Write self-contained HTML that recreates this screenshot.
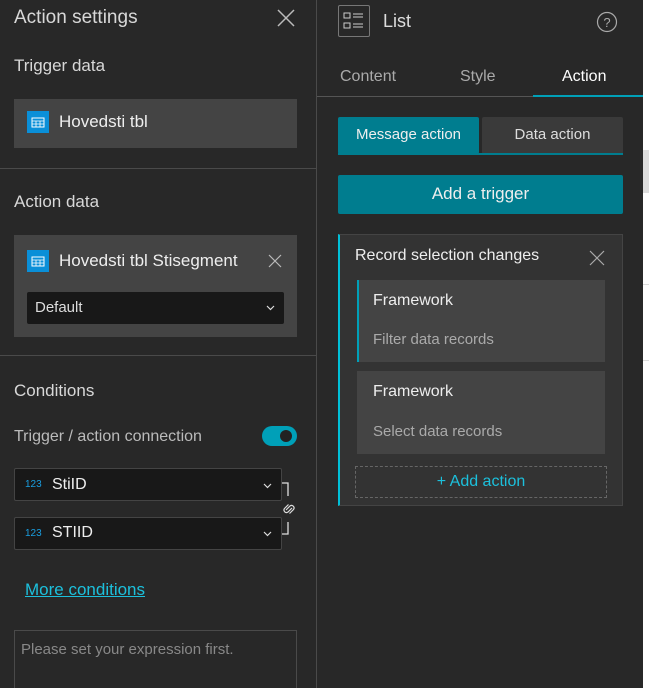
<!DOCTYPE html>
<html><head><style>
*{box-sizing:border-box;margin:0;padding:0}
html,body{width:649px;height:688px;overflow:hidden}
body{background:#fff;font-family:"Liberation Sans",sans-serif;position:relative}
.a{position:absolute}
.L{left:0;top:0;width:317px;height:688px;background:#282828;border-right:1px solid #4a4a4a;overflow:hidden}
.R{left:317px;top:0;width:326px;height:688px;background:#282828}
.t{color:#d8d8d8}
.hr{height:1px;background:#4a4a4a}
.icon{width:22px;height:22px;background:#0a8fd8;}
.sel{background:#181818;border:1px solid #444;border-radius:2px;color:#e8e8e8}
</style></head><body>
<div class="a L">
 <div class="a t" style="left:14px;top:7px;font-size:19px">Action settings</div>
 <svg class="a" style="left:277px;top:9px" width="18" height="18"><path d="M1 1L17 17M17 1L1 17" stroke="#bbb" stroke-width="1.5"/></svg>
 <div class="a t" style="left:14px;top:56px;font-size:17px">Trigger data</div>
 <div class="a" style="left:14px;top:99px;width:283px;height:49px;background:#444"></div>
 <div class="a icon" style="left:27px;top:111px"><svg width="22" height="22"><rect x="5" y="7" width="12" height="9" fill="none" stroke="#fff"/><path d="M5 10H17M5 13H17M9 10V16M13 10V16" stroke="#fff" stroke-width=".8"/></svg></div>
 <div class="a" style="left:59px;top:112px;font-size:17px;color:#eee">Hovedsti tbl</div>
 <div class="a hr" style="left:0;top:168px;width:317px"></div>
 <div class="a t" style="left:14px;top:192px;font-size:17px">Action data</div>
 <div class="a" style="left:14px;top:235px;width:283px;height:102px;background:#444"></div>
 <div class="a icon" style="left:27px;top:250px"><svg width="22" height="22"><rect x="5" y="7" width="12" height="9" fill="none" stroke="#fff"/><path d="M5 10H17M5 13H17M9 10V16M13 10V16" stroke="#fff" stroke-width=".8"/></svg></div>
 <div class="a" style="left:59px;top:251px;font-size:17px;color:#eee">Hovedsti tbl Stisegment</div>
 <svg class="a" style="left:268px;top:254px" width="14" height="14"><path d="M1 1L13 13M13 1L1 13" stroke="#bbb" stroke-width="1.2"/></svg>
 <div class="a sel" style="left:27px;top:292px;width:257px;height:32px;border:none"></div>
 <div class="a" style="left:35px;top:299px;font-size:15px;color:#ddd">Default</div>
 <svg class="a" style="left:266px;top:305px" width="9" height="6"><path d="M1 1L4.5 4.5L8 1" stroke="#ddd" fill="none" stroke-width="1.2"/></svg>
 <div class="a hr" style="left:0;top:355px;width:317px"></div>
 <div class="a t" style="left:14px;top:381px;font-size:17px">Conditions</div>
 <div class="a" style="left:14px;top:428px;font-size:16px;color:#bbb">Trigger / action connection</div>
 <div class="a" style="left:262px;top:426px;width:35px;height:20px;border-radius:10px;background:#00a0b8"></div>
 <div class="a" style="left:280px;top:430px;width:12px;height:12px;border-radius:6px;background:#222"></div>
 <div class="a sel" style="left:14px;top:468px;width:268px;height:33px"></div>
 <div class="a" style="left:25px;top:479px;font-size:10px;color:#1a9ee0">123</div>
 <div class="a" style="left:52px;top:476px;font-size:16px;color:#eee">StiID</div>
 <svg class="a" style="left:263px;top:483px" width="9" height="6"><path d="M1 1L4.5 4.5L8 1" stroke="#ddd" fill="none" stroke-width="1.2"/></svg>
 <div class="a sel" style="left:14px;top:517px;width:268px;height:33px"></div>
 <div class="a" style="left:25px;top:528px;font-size:10px;color:#1a9ee0">123</div>
 <div class="a" style="left:52px;top:524px;font-size:16px;color:#eee">STIID</div>
 <svg class="a" style="left:263px;top:531px" width="9" height="6"><path d="M1 1L4.5 4.5L8 1" stroke="#ddd" fill="none" stroke-width="1.2"/></svg>
 <svg class="a" style="left:280px;top:482px" width="20" height="54"><path d="M2 1H8V14M8 40V52H2" stroke="#ddd" fill="none" stroke-width="1.3"/><path d="M6 28l4-4a2.5 2.5 0 0 1 3.5 3.5l-4 4M12 26l-4 4a2.5 2.5 0 0 1-3.5-3.5l4-4" stroke="#ddd" fill="none" stroke-width="1.2"/></svg>
 <div class="a" style="left:25px;top:580px;font-size:17px;color:#1cc0dc;text-decoration:underline">More conditions</div>
 <div class="a" style="left:14px;top:630px;width:283px;height:80px;border:1px solid #4a4a4a"></div>
 <div class="a" style="left:21px;top:641px;font-size:15px;color:#888">Please set your expression first.</div>
</div>
<div class="a R">
 <div class="a" style="left:21px;top:5px;width:32px;height:32px;border:1px solid #777;border-radius:2px"></div>
 <svg class="a" style="left:21px;top:5px" width="32" height="32"><rect x="6" y="8" width="6" height="5" fill="none" stroke="#ccc"/><rect x="6" y="18" width="6" height="5" fill="none" stroke="#ccc"/><path d="M15 9H25M15 12H25M15 19H25M15 22H25" stroke="#ccc"/></svg>
 <div class="a t" style="left:66px;top:11px;font-size:18px;color:#ddd">List</div>
 <svg class="a" style="left:279px;top:11px" width="22" height="22"><circle cx="11" cy="11" r="9.5" fill="none" stroke="#aaa" stroke-width="1.2"/><text x="11" y="16" font-size="13" fill="#aaa" text-anchor="middle" font-family="Liberation Sans">?</text></svg>
 <div class="a" style="left:23px;top:68px;font-size:16px;color:#aaa">Content</div>
 <div class="a" style="left:143px;top:68px;font-size:16px;color:#aaa">Style</div>
 <div class="a" style="left:245px;top:68px;font-size:16px;color:#fff">Action</div>
 <div class="a" style="left:0;top:96px;width:326px;height:1px;background:#555"></div>
 <div class="a" style="left:216px;top:95px;width:110px;height:2px;background:#00a0b8"></div>
 <div class="a" style="left:21px;top:117px;width:141px;height:37px;background:#007d8f;border-radius:2px"></div>
 <div class="a" style="left:21px;top:126px;width:141px;text-align:center;font-size:15px;color:#eee">Message action</div>
 <div class="a" style="left:165px;top:117px;width:141px;height:37px;background:#3a3a3a;border-radius:2px"></div>
 <div class="a" style="left:165px;top:126px;width:141px;text-align:center;font-size:15px;color:#ddd">Data action</div>
 <div class="a" style="left:21px;top:153px;width:285px;height:2px;background:#007d8f"></div>
 <div class="a" style="left:21px;top:175px;width:285px;height:39px;background:#007d8f;border-radius:2px"></div>
 <div class="a" style="left:21px;top:184px;width:285px;text-align:center;font-size:17px;color:#eee">Add a trigger</div>
 <div class="a" style="left:21px;top:234px;width:285px;height:272px;background:#333;border:1px solid #444;border-left:2px solid #00c0d8"></div>
 <div class="a" style="left:38px;top:247px;font-size:16px;color:#eee">Record selection changes</div>
 <svg class="a" style="left:272px;top:250px" width="16" height="16"><path d="M1 1L15 15M15 1L1 15" stroke="#aaa" stroke-width="1.2"/></svg>
 <div class="a" style="left:40px;top:280px;width:248px;height:82px;background:#444;border-left:2px solid #00a0b8"></div>
 <div class="a" style="left:56px;top:292px;font-size:16px;color:#eee">Framework</div>
 <div class="a" style="left:56px;top:331px;font-size:15px;color:#aaa">Filter data records</div>
 <div class="a" style="left:40px;top:371px;width:248px;height:83px;background:#444"></div>
 <div class="a" style="left:56px;top:383px;font-size:16px;color:#eee">Framework</div>
 <div class="a" style="left:56px;top:423px;font-size:15px;color:#aaa">Select data records</div>
 <div class="a" style="left:38px;top:466px;width:252px;height:32px;border:1px dashed #666"></div>
 <div class="a" style="left:38px;top:473px;width:252px;text-align:center;font-size:16px;color:#1cc0dc">+ Add action</div>
</div>
<div class="a" style="left:643px;top:150px;width:6px;height:43px;background:#ddd"></div>
<div class="a" style="left:643px;top:284px;width:6px;height:1px;background:#ddd"></div>
<div class="a" style="left:643px;top:360px;width:6px;height:1px;background:#ddd"></div>
</body></html>
